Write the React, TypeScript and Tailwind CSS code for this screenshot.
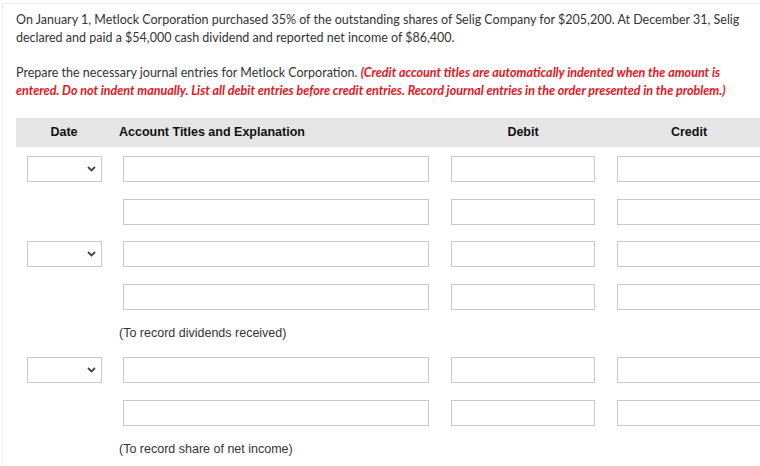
import React from 'react';

const tableFont = { fontFamily: '"Liberation Sans", Arial, sans-serif' };

const Select: React.FC = () => (
  <div className="flex h-[26px] w-[75px] items-center justify-end border border-[#c8c8c8] bg-white pr-[5px]">
    <svg width="9" height="6" viewBox="0 0 9 6">
      <path d="M1 1 L4.5 4.5 L8 1" fill="none" stroke="#444" strokeWidth="1.8" />
    </svg>
  </div>
);

const Box: React.FC<{ w: string }> = ({ w }) => (
  <div className={`h-[26px] border border-[#c8c8c8] bg-white ${w}`} />
);

const Row: React.FC<{ date?: boolean }> = ({ date }) => (
  <div className="flex h-[26px] items-center">
    <div className="w-[96px] shrink-0 pl-[11px]">{date && <Select />}</div>
    <div className="w-[328px] shrink-0 px-[11px]"><Box w="w-[306px]" /></div>
    <div className="w-[166px] shrink-0 px-[11px]"><Box w="w-[144px]" /></div>
    <div className="w-[166px] shrink-0 pl-[11px]"><Box w="w-[155px]" /></div>
  </div>
);

const Note: React.FC<{ text: string }> = ({ text }) => (
  <div className="flex h-[16px] items-center pl-[103px] text-[12.5px] text-[#333]" style={tableFont}>
    {text}
  </div>
);

export default function App() {
  return (
    <div className="h-[466px] w-[760px] overflow-hidden bg-white">
      <div className="ml-[2px] mt-[3px] h-[480px] border-l border-t border-[#ececec] pl-[13px] pt-[7px]">
        <div className="pr-[2px] text-[12.5px] leading-[18px] text-[#333]" style={{ fontFamily: 'Lato, sans-serif' }}>
          <p>
            On January 1, Metlock Corporation purchased 35% of the outstanding shares of Selig Company for $205,200. At December 31, Selig declared and paid a $54,000 cash dividend and reported net income of $86,400.
          </p>
          <p className="mt-[17px]">
            Prepare the necessary journal entries for Metlock Corporation.{' '}
            <span className="font-bold italic text-[#e6141c]">
              (Credit account titles are automatically indented when the amount is entered. Do not indent manually. List all debit entries before credit entries. Record journal entries in the order presented in the problem.)
            </span>
          </p>
        </div>

        <div className="mt-[18px] w-[760px]" style={tableFont}>
          <div className="flex h-[29px] items-center bg-[#e5e5e5] text-[12.5px] font-bold text-[#111]">
            <div className="w-[96px] text-center">Date</div>
            <div className="w-[328px] pl-[7px]">Account Titles and Explanation</div>
            <div className="w-[166px] text-center">Debit</div>
            <div className="w-[166px] text-center">Credit</div>
          </div>

          <div className="mt-[9px] flex flex-col">
            <Row date />
            <div className="mt-[17px]"><Row /></div>
            <div className="mt-[16px]"><Row date /></div>
            <div className="mt-[17px]"><Row /></div>
            <div className="mt-[15px]"><Note text="(To record dividends received)" /></div>
            <div className="mt-[16px]"><Row date /></div>
            <div className="mt-[17px]"><Row /></div>
            <div className="mt-[15px]"><Note text="(To record share of net income)" /></div>
          </div>
        </div>
      </div>
    </div>
  );
}
